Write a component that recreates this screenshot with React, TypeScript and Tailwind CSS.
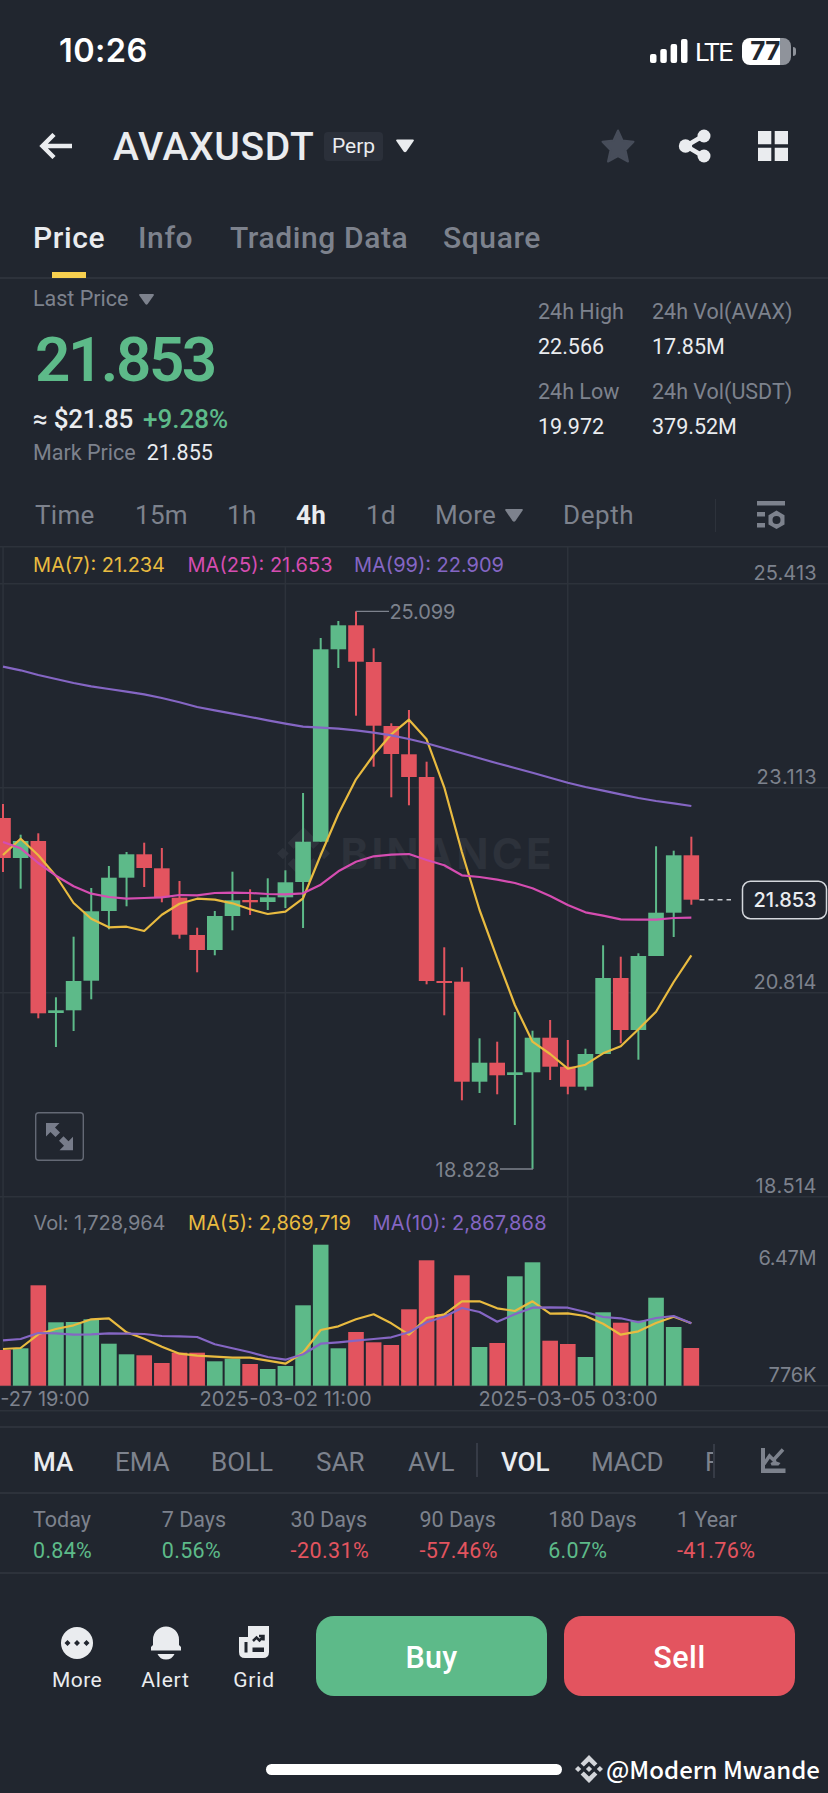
import React from 'react';

type Candle = [up: number, high: number, top: number, bottom: number, low: number, volTop: number];

const GREEN = '#5dba89';
const RED = '#e3545f';
const YELLOW = '#e9bb40';
const PINK = '#d54db1';
const PURPLE = '#8566c4';
const GRID = '#2d323b';
const MUTED = '#7d828d';

const STEP = 17.65;
const cx = (i: number) => 3 + i * STEP;

const candles: Candle[] = [
  [0, 804, 818, 858, 872, 1350],
  [1, 834.7, 841, 858, 888.7, 1348.3],
  [0, 833.3, 841, 1013.3, 1018.3, 1285.3],
  [1, 997.3, 1010.3, 1013, 1047, 1322.3],
  [1, 936.7, 981, 1010.3, 1031, 1322],
  [1, 888, 911.3, 980.7, 999.3, 1319.3],
  [1, 866, 877.7, 911, 929.3, 1343.7],
  [1, 852, 854.3, 877.7, 906.3, 1354.3],
  [0, 842.7, 854.3, 868, 887, 1355.3],
  [0, 848, 868.3, 897.3, 902.3, 1363],
  [0, 881, 897.7, 934.7, 938.7, 1352.7],
  [0, 927.7, 935, 950, 972.3, 1352.7],
  [1, 911, 916, 950, 955.3, 1361.3],
  [1, 871.7, 900.3, 916, 930.3, 1358.7],
  [0, 889.3, 900, 902.3, 915, 1364],
  [1, 878.3, 897.3, 902, 910, 1369],
  [1, 870.3, 882.3, 897.3, 908, 1366],
  [1, 793, 841.7, 882, 928, 1305.3],
  [1, 638, 649.3, 841.7, 841.7, 1244.7],
  [1, 621, 625.3, 649.3, 668, 1348.3],
  [0, 611.3, 625.3, 661.7, 715.7, 1332],
  [0, 648.3, 662, 725.7, 766.7, 1342.3],
  [0, 723.3, 726, 754, 797.3, 1345],
  [0, 710, 754.3, 777, 805.3, 1309.3],
  [0, 761.7, 777, 981, 984.3, 1260.3],
  [0, 947.3, 981, 983, 1015.3, 1314],
  [0, 967.3, 981.7, 1081.7, 1100.3, 1275.3],
  [1, 1038.3, 1062.7, 1081.7, 1093, 1347],
  [0, 1041.7, 1062.7, 1075.3, 1094.3, 1343],
  [1, 1012, 1072.3, 1075, 1125, 1276.3],
  [1, 1030.7, 1037.7, 1072.3, 1169, 1262.3],
  [0, 1020, 1037.7, 1066.7, 1080, 1340.7],
  [0, 1040, 1066.7, 1086.7, 1094.3, 1344],
  [1, 1048.7, 1054, 1086.7, 1090.3, 1357],
  [1, 945.3, 978, 1054, 1054, 1312.3],
  [0, 956.7, 978, 1030, 1043.3, 1322.7],
  [1, 953.3, 956, 1030, 1059.7, 1320.7],
  [1, 846.3, 912.7, 956, 956, 1297.7],
  [1, 850.7, 855.3, 912.7, 937, 1327],
  [0, 836.7, 855.3, 899.7, 904.7, 1348],
];

const ma7 = [
  855, 838.7, 855.3, 876, 903, 918.7, 927.3, 926.7, 931, 914.7, 903.7, 898.7, 899.7, 903.3, 909.3, 914, 911.7, 898.3,
  855, 814, 779.3, 755, 734.3, 719.7, 739.3, 787.3, 852, 910, 958.3, 1005, 1041.7, 1054, 1068.7, 1064.7, 1053.3,
  1046.3, 1029.3, 1011.7, 982, 955.3,
];
const ma25 = [
  842, 848.3, 863, 875.7, 886.3, 893.7, 897, 898.7, 898, 897.3, 895, 895.3, 893, 892.7, 893, 894, 894.3, 893.3, 884.7,
  871.3, 861.7, 856.3, 854.7, 854, 860, 865.3, 875.3, 877, 879.7, 883, 888.3, 896, 905, 912.3, 915.7, 919.3, 919.7,
  919.7, 918, 917.7,
];
const ma99 = [
  666.7, 670.3, 675, 679, 683, 686.3, 689, 691.7, 694.3, 698, 702.3, 707, 710.3, 713.7, 717, 720.3, 723.7, 726.7,
  727.7, 728.7, 730.3, 732.7, 735.3, 739, 743.3, 748.3, 753.3, 758.3, 763.3, 768, 772.7, 777.7, 782.7, 787, 790.7,
  794.3, 798, 801, 803.3, 806,
];
const volMa5 = [
  1349, 1348, 1334.3, 1329, 1325.3, 1319.3, 1318.3, 1332.3, 1338.7, 1346.7, 1353.7, 1355.7, 1356.7, 1357.7, 1357.7,
  1360.7, 1363.7, 1352.7, 1330, 1326.3, 1319.3, 1314.3, 1323.3, 1334.7, 1318, 1314.3, 1301.3, 1301.3, 1308.3, 1311,
  1301.3, 1313.7, 1313.3, 1316, 1323.7, 1334.7, 1331.3, 1323, 1316.7, 1323.3,
];
const volMa10 = [
  1340.3, 1339, 1333, 1333.3, 1334.7, 1334.3, 1333.3, 1333.7, 1334, 1336, 1336.3, 1337, 1344.3, 1348.3, 1352.3, 1357,
  1359.7, 1354.3, 1343.7, 1342.3, 1340.7, 1339, 1337.3, 1332.3, 1322.3, 1316.7, 1308, 1312, 1321.7, 1314.3, 1307.7,
  1307.3, 1307.7, 1312, 1317, 1318.3, 1322.3, 1318, 1316, 1323.3,
];

const toPoints = (ys: number[]) => ys.map((y, i) => `${cx(i)},${y}`).join(' ');

const tabs = [
  { label: 'Price', className: 'w-[105px] text-[#eaecef]' },
  { label: 'Info', className: 'w-[92px] text-[#7d828d]' },
  { label: 'Trading Data', className: 'w-[213px] text-[#7d828d]' },
  { label: 'Square', className: 'text-[#7d828d]' },
];

const stats = [
  { label: '24h High', value: '22.566' },
  { label: '24h Vol(AVAX)', value: '17.85M' },
  { label: '24h Low', value: '19.972' },
  { label: '24h Vol(USDT)', value: '379.52M' },
];

const returns = [
  { label: 'Today', value: '0.84%' },
  { label: '7 Days', value: '0.56%' },
  { label: '30 Days', value: '-20.31%' },
  { label: '90 Days', value: '-57.46%' },
  { label: '180 Days', value: '6.07%' },
  { label: '1 Year', value: '-41.76%' },
];

function Caret({ className }: { className: string }) {
  return (
    <svg viewBox="0 0 18 13" className={className} fill="currentColor">
      <path d="M1.2 0h15.6q1.6 0 .8 1.6L10.4 12q-1.4 1.600-2.800 0L.4 1.600Q-.4 0 1.200 0z" />
    </svg>
  );
}

function BinanceMark({ className }: { className: string }) {
  return (
    <svg viewBox="0 0 28 28" className={className} fill="currentColor">
      <path d="M14 0l8.400 8.400-3.200 3.200L14 6.400l-5.200 5.200-3.200-3.200z" />
      <path d="M14 28l8.400-8.400-3.200-3.200-5.200 5.200-5.200-5.200-3.200 3.200z" />
      <path d="M3.100 10.900L6.200 14l-3.100 3.100L0 14zM24.900 10.900L28 14l-3.100 3.100-3.100-3.100zM14 10.900l3.100 3.100-3.100 3.100-3.100-3.100z" />
    </svg>
  );
}

function StatusBar() {
  return (
    <div className="flex h-[102px] items-center justify-between pl-[59px] pr-[32px] font-['Inter',sans-serif] text-white">
      <span className="pt-[1px] text-[32.5px] font-semibold leading-none tracking-[0.4px]">10:26</span>
      <div className="flex items-center">
        <svg viewBox="0 0 38 24" className="h-6 w-[38px]" fill="currentColor">
          <rect x="0" y="15" width="6.500" height="9" rx="2" />
          <rect x="10.300" y="10" width="6.500" height="14" rx="2" />
          <rect x="20.600" y="5" width="6.500" height="19" rx="2" />
          <rect x="31" y="0" width="6.500" height="24" rx="2" />
        </svg>
        <span className="ml-[7px] w-[40px] whitespace-nowrap pt-[2px] font-['Roboto',sans-serif] text-[26.5px] leading-none tracking-[-1.6px]">
          LTE
        </span>
        <div className="ml-[7px] flex h-[27px] w-[49px] items-center justify-center rounded-[8px] bg-[linear-gradient(to_right,#fff_77%,#8f939b_77%)] pr-[3px] text-[26px] font-bold leading-none tracking-[-0.5px] text-[#21262f]">
          77
        </div>
        <div className="ml-[2px] h-[9px] w-[3px] rounded-r-full bg-[#8f939b]" />
      </div>
    </div>
  );
}

function Header() {
  return (
    <header className="flex h-[88px] items-center pl-[39px] pr-[40px] text-[#eaecef]">
      <svg viewBox="0 0 33 26" className="h-[26px] w-[33px]" fill="none" stroke="currentColor" strokeWidth="4.500">
        <path d="M33 13H4M15 1.500L3.500 13 15 24.500" />
      </svg>
      <h1 className="ml-[41px] w-[205px] pt-[2px] text-[39px] font-medium leading-none tracking-[0.7px]">AVAXUSDT</h1>
      <span className="ml-[6px] flex h-[29px] w-[59px] items-center justify-center rounded-[4px] bg-[#2b303a] text-[21px] leading-none">
        Perp
      </span>
      <Caret className="ml-[13px] h-[14px] w-[18px]" />
      <svg viewBox="0 0 34 34" className="ml-auto h-[34px] w-[34px] text-[#474d5a]" fill="currentColor">
        <path
          d="M17 1.500l4.500 10 11 1.200-8 8.300L27 32.500 17 27 7 32.500 9.500 21l-8-8.300 11-1.200z"
          stroke="currentColor"
          strokeWidth="2"
          strokeLinejoin="round"
        />
      </svg>
      <svg viewBox="0 0 34 34" className="ml-[43px] h-[34px] w-[34px]" fill="currentColor">
        <path d="M25 7L8 17l17 10" fill="none" stroke="currentColor" strokeWidth="4.500" />
        <circle cx="26" cy="7" r="6.500" />
        <circle cx="7.500" cy="17" r="6.700" />
        <circle cx="26" cy="27" r="6.500" />
      </svg>
      <svg viewBox="0 0 30 30" className="ml-[46px] h-[30px] w-[30px]" fill="currentColor">
        <path d="M0 0h13.300v13.300H0zM16.700 0H30v13.300H16.700zM0 16.700h13.300V30H0zM16.700 16.700H30V30H16.700z" />
      </svg>
    </header>
  );
}

function PriceSummary() {
  return (
    <section className="flex h-[200px] justify-between pl-[33px]">
      <div>
        <div className="mt-[7px] flex h-[26px] items-center text-[21.5px] leading-none text-[#7d828d]">
          Last Price
          <Caret className="ml-[11px] h-[11px] w-[15px]" />
        </div>
        <div className="mt-[13px] flex h-[70px] items-center pl-[2px] text-[62px] font-semibold leading-none tracking-[-2.5px] text-[#5dba89]">
          21.853
        </div>
        <div className="mt-[9px] flex h-[30px] items-center text-[26px] font-medium leading-none text-[#eaecef]">
          <span className="w-[110px] whitespace-nowrap tracking-[-0.3px]">≈ $21.85</span>
          <span className="text-[#5dba89]">+9.28%</span>
        </div>
        <div className="mt-[6px] flex h-[26px] items-center gap-[11px] text-[21.5px] leading-none text-[#7d828d]">
          Mark Price
          <span className="text-[#eaecef]">21.855</span>
        </div>
      </div>
      <div className="mt-[22px] grid w-[290px] grid-cols-[114px_1fr] content-start gap-y-[18px] text-[21.5px] leading-none">
        {stats.map((s) => (
          <div key={s.label} className="flex h-[62px] flex-col gap-[13px] whitespace-nowrap">
            <span className="text-[#7d828d]">{s.label}</span>
            <span className="text-[#eaecef]">{s.value}</span>
          </div>
        ))}
      </div>
    </section>
  );
}

function Intervals() {
  return (
    <nav className="flex h-[67px] items-center pl-[35px] pr-[43px] pt-[5px] text-[26px] leading-none tracking-[0.3px] text-[#7d828d]">
      <span className="w-[100px]">Time</span>
      <span className="w-[92px]">15m</span>
      <span className="w-[69px]">1h</span>
      <span className="w-[70px] font-bold text-[#eaecef]">4h</span>
      <span className="w-[69px]">1d</span>
      <span className="flex w-[128px] items-center gap-[9px]">
        More
        <Caret className="h-[13px] w-[18px]" />
      </span>
      <span className="tracking-[0.6px]">Depth</span>
      <div className="ml-auto h-[33px] w-px bg-[#2d323b]" />
      <svg viewBox="0 0 28 28" className="ml-[41px] h-[28px] w-[28px]" fill="currentColor">
        <path d="M0 0h28v4.500H0zM0 11h8v4.500H0zM0 22h8v4.500H0z" />
        <path fillRule="evenodd" d="M19.500 9.500l8 4.700v9.300l-8 4.500-8-4.500v-9.300zM19.500 15a4 4 0 100 8 4 4 0 000-8z" />
      </svg>
    </nav>
  );
}

function Chart() {
  return (
    <svg viewBox="0 546 828 880" className="block h-[880px] w-full font-['Inter',sans-serif] text-[20px]">
      {/* grid */}
      <g fill={GRID}>
        {[546, 583, 787, 992, 1196, 1385, 1410].map((y) => (
          <rect key={y} x="0" y={y} width="828" height="1.500" />
        ))}
        {[2.3, 284.6, 567].map((x) => (
          <rect key={x} x={x} y="546" width="1.500" height="840" />
        ))}
      </g>

      {/* watermark */}
      <g fill="#2d323b">
        <svg x="277" y="827" width="53" height="53" viewBox="0 0 28 28">
          <path d="M14 0l8.400 8.400-3.200 3.200L14 6.400l-5.200 5.200-3.200-3.200zM14 28l8.400-8.400-3.200-3.200-5.200 5.200-5.200-5.200-3.200 3.200z" />
          <path d="M3.100 10.900L6.200 14l-3.100 3.100L0 14zM24.900 10.900L28 14l-3.100 3.100-3.100-3.100zM14 10.900l3.100 3.100-3.100 3.100-3.100-3.100z" />
        </svg>
        <text x="340.500" y="869" fontSize="42" fontWeight="700" textLength="211">BINANCE</text>
      </g>

      {/* candles and volume bars */}
      {candles.map(([up, high, top, bottom, low, volTop], i) => (
        <g key={i} fill={up ? GREEN : RED}>
          <rect x={cx(i) - 1} y={high} width="2" height={low - high} />
          <rect x={cx(i) - 7.8} y={top} width="15.600" height={bottom - top} />
          <rect x={cx(i) - 7.8} y={volTop} width="15.600" height={1385.7 - volTop} />
        </g>
      ))}

      <g fill="none" strokeWidth="2.200" strokeLinejoin="round">
        <polyline points={toPoints(ma7)} stroke={YELLOW} />
        <polyline points={toPoints(ma25)} stroke={PINK} />
        <polyline points={toPoints(ma99)} stroke={PURPLE} />
        <polyline points={toPoints(volMa5)} stroke={YELLOW} />
        <polyline points={toPoints(volMa10)} stroke={PURPLE} />
      </g>

      {/* high / low markers */}
      <path d="M356 611.300H389M500 1169H533" stroke={MUTED} strokeWidth="1.300" />
      <g fill={MUTED}>
        <text x="389.500" y="619" textLength="66">25.099</text>
        <text x="435.500" y="1176.500" textLength="64">18.828</text>
      </g>

      {/* legends */}
      <text x="33" y="571.500" fill={YELLOW} textLength="132">MA(7): 21.234</text>
      <text x="187.500" y="571.500" fill={PINK} textLength="145">MA(25): 21.653</text>
      <text x="354" y="571.500" fill={PURPLE} textLength="150">MA(99): 22.909</text>
      <text x="33.500" y="1229.500" fill={MUTED} textLength="132">Vol: 1,728,964</text>
      <text x="188" y="1229.500" fill={YELLOW} textLength="163">MA(5): 2,869,719</text>
      <text x="372.500" y="1229.500" fill={PURPLE} textLength="174">MA(10): 2,867,868</text>

      {/* axis labels */}
      <g fill={MUTED} textAnchor="end">
        <text x="816.500" y="579.500" textLength="63">25.413</text>
        <text x="816.500" y="784" textLength="60">23.113</text>
        <text x="816.500" y="989" textLength="63">20.814</text>
        <text x="816.500" y="1193" textLength="61">18.514</text>
        <text x="816.500" y="1264.500" textLength="58">6.47M</text>
        <text x="816.500" y="1381.500" textLength="48">776K</text>
        <text x="89.500" y="1406">2025-02-27 19:00</text>
      </g>
      <g fill={MUTED}>
        <text x="199.500" y="1406" textLength="172">2025-03-02 11:00</text>
        <text x="478.500" y="1406" textLength="179">2025-03-05 03:00</text>
      </g>

      {/* last price */}
      <path d="M699.500 899.700H731" stroke="#c9ccd2" strokeWidth="1.500" strokeDasharray="5 4" />
      <rect x="742.500" y="881.300" width="84" height="37.400" rx="8" fill="#21262f" stroke="#d4d7dc" strokeWidth="1.500" />
      <text x="753.500" y="907.300" fill="#eaecef" fontWeight="500" textLength="63">21.853</text>

      {/* fullscreen button */}
      <rect x="35.700" y="1112.700" width="47.600" height="47.600" rx="3" fill="#21262f" stroke="#646975" strokeWidth="1.400" />
      <path
        fill="#777c8a"
        d="M46 1123h13.500l-4.500 4.500 5 5-4.500 4.500-5-5-4.500 4.500zM73 1150.300H59.500l4.500-4.500-5-5 4.500-4.500 5 5 4.500-4.500z"
      />
    </svg>
  );
}

function Indicators() {
  return (
    <div className="flex h-[68px] items-center border-b-2 border-t-2 border-[#2d323b] pl-[33px] pt-[3px] text-[26px] leading-none text-[#7d828d]">
      <span className="w-[82px] pt-[1px] font-medium text-[#eaecef]">MA</span>
      <span className="w-[96px] pt-[1px]">EMA</span>
      <span className="w-[105px] pt-[1px]">BOLL</span>
      <span className="w-[92px] pt-[1px]">SAR</span>
      <span className="w-[68px] pt-[1px]">AVL</span>
      <div className="mb-[3px] h-[34px] w-[2px] bg-[#363b46]" />
      <span className="ml-[23px] w-[90px] pt-[1px] font-medium text-[#eaecef]">VOL</span>
      <span className="w-[114px] pt-[1px] tracking-[-0.4px]">MACD</span>
      <div className="mb-[2px] flex h-[34px] w-[10px] items-center overflow-hidden border-r-2 border-[#363b46] pt-[3px]">RSI</div>
      <svg viewBox="0 0 25 25" className="mb-[3px] ml-[46px] h-[25px] w-[25px]" fill="currentColor">
        <path d="M0 0h4v20.500h20.500V25H0z" />
        <path d="M3 16l5.500-8 4 4L22 1.500" fill="none" stroke="currentColor" strokeWidth="3.500" />
        <path d="M14 9.500l1.500 4 4 1.500-2 2.500h-7l-1-2.500 3-1.500z" />
      </svg>
    </div>
  );
}

function BottomBar() {
  return (
    <footer className="flex h-[122px] items-end text-[#eaecef]">
      <div className="flex w-[316px] pl-[33px] text-[21px] leading-none">
        <div className="flex h-[80px] w-[88px] flex-col items-center pt-[10px]">
          <svg viewBox="0 0 34 34" className="h-[34px] w-[34px]">
            <circle cx="17" cy="17" r="16" fill="currentColor" />
            <path d="M7.500 14l3 3-3 3-3-3zM17 14l3 3-3 3-3-3zM26.500 14l3 3-3 3-3-3z" fill="#21262f" />
          </svg>
          <span className="mt-[10px] tracking-[0.4px]">More</span>
        </div>
        <div className="flex h-[80px] w-[89px] flex-col items-center pt-[10px]">
          <svg viewBox="0 0 34 34" className="h-[34px] w-[34px]" fill="currentColor">
            <path d="M4 19V13.500a13 13 0 0126 0V19l2 2v3.500H2V21zM8.500 28h17q-2.500 5.500-8.500 5.500T8.500 28z" />
          </svg>
          <span className="mt-[10px] tracking-[0.8px]">Alert</span>
        </div>
        <div className="flex h-[80px] w-[88px] flex-col items-center pt-[10px]">
          <svg viewBox="0 0 34 34" className="h-[34px] w-[34px]">
            <path d="M11 0h21v26q0 6-6 6H8q-6 0-6-6V11h9z" fill="currentColor" />
            <path d="M7.500 16h3v10.500h-3zM15.500 21.500H27V26H15.500z" fill="#21262f" />
            <path d="M16 15l3.500-3.500 3 3L26 11M22 10h4.500v4.500" fill="none" stroke="#21262f" strokeWidth="2.500" />
          </svg>
          <span className="mt-[10px] tracking-[0.8px]">Grid</span>
        </div>
      </div>
      <button className="h-[80px] w-[231px] rounded-[18px] bg-[#5dba89] pt-[3px] text-[30.5px] font-medium tracking-[0.3px] text-white">
        Buy
      </button>
      <button className="ml-[17px] h-[80px] w-[231px] rounded-[18px] bg-[#e3545f] pt-[3px] text-[30.5px] font-medium tracking-[0.5px] text-white">
        Sell
      </button>
    </footer>
  );
}

export default function App() {
  return (
    <div className="h-[1793px] w-[828px] overflow-hidden bg-[#21262f] font-['Roboto',sans-serif]">
      <StatusBar />
      <Header />
      <nav className="relative flex h-[89px] items-center border-b-2 border-[#2d323b] pl-[33px] pt-[8px] text-[30px] font-medium leading-none tracking-[0.6px]">
        {tabs.map((tab) => (
          <span key={tab.label} className={tab.className}>
            {tab.label}
          </span>
        ))}
        <div className="absolute -bottom-[1px] left-[52px] h-[6px] w-[34px] bg-[#f8d04f]" />
      </nav>
      <PriceSummary />
      <Intervals />
      <Chart />
      <Indicators />
      <section className="flex h-[80px] border-b-2 border-[#2d323b] pl-[33px] pt-[15px] text-[21.5px] leading-none">
        {returns.map((r) => (
          <div key={r.label} className="flex w-[128.8px] flex-col gap-[9px] whitespace-nowrap">
            <span className="text-[#7d828d]">{r.label}</span>
            <span className={r.value.startsWith('-') ? 'tracking-[0.4px] text-[#e3545f]' : 'tracking-[0.3px] text-[#5dba89]'}>
              {r.value}
            </span>
          </div>
        ))}
      </section>
      <BottomBar />
      <div className="mt-[59px] flex h-[28px] items-center">
        <div className="ml-[266px] h-[11px] w-[296px] rounded-full bg-white" />
        <BinanceMark className="ml-[13px] h-[28px] w-[28px] text-[#d3d5da]" />
        <span className="ml-[3px] whitespace-nowrap pb-[1px] font-['Noto_Sans_CJK_SC',sans-serif] text-[24px] font-medium leading-none text-white">
          @Modern Mwande
        </span>
      </div>
    </div>
  );
}
